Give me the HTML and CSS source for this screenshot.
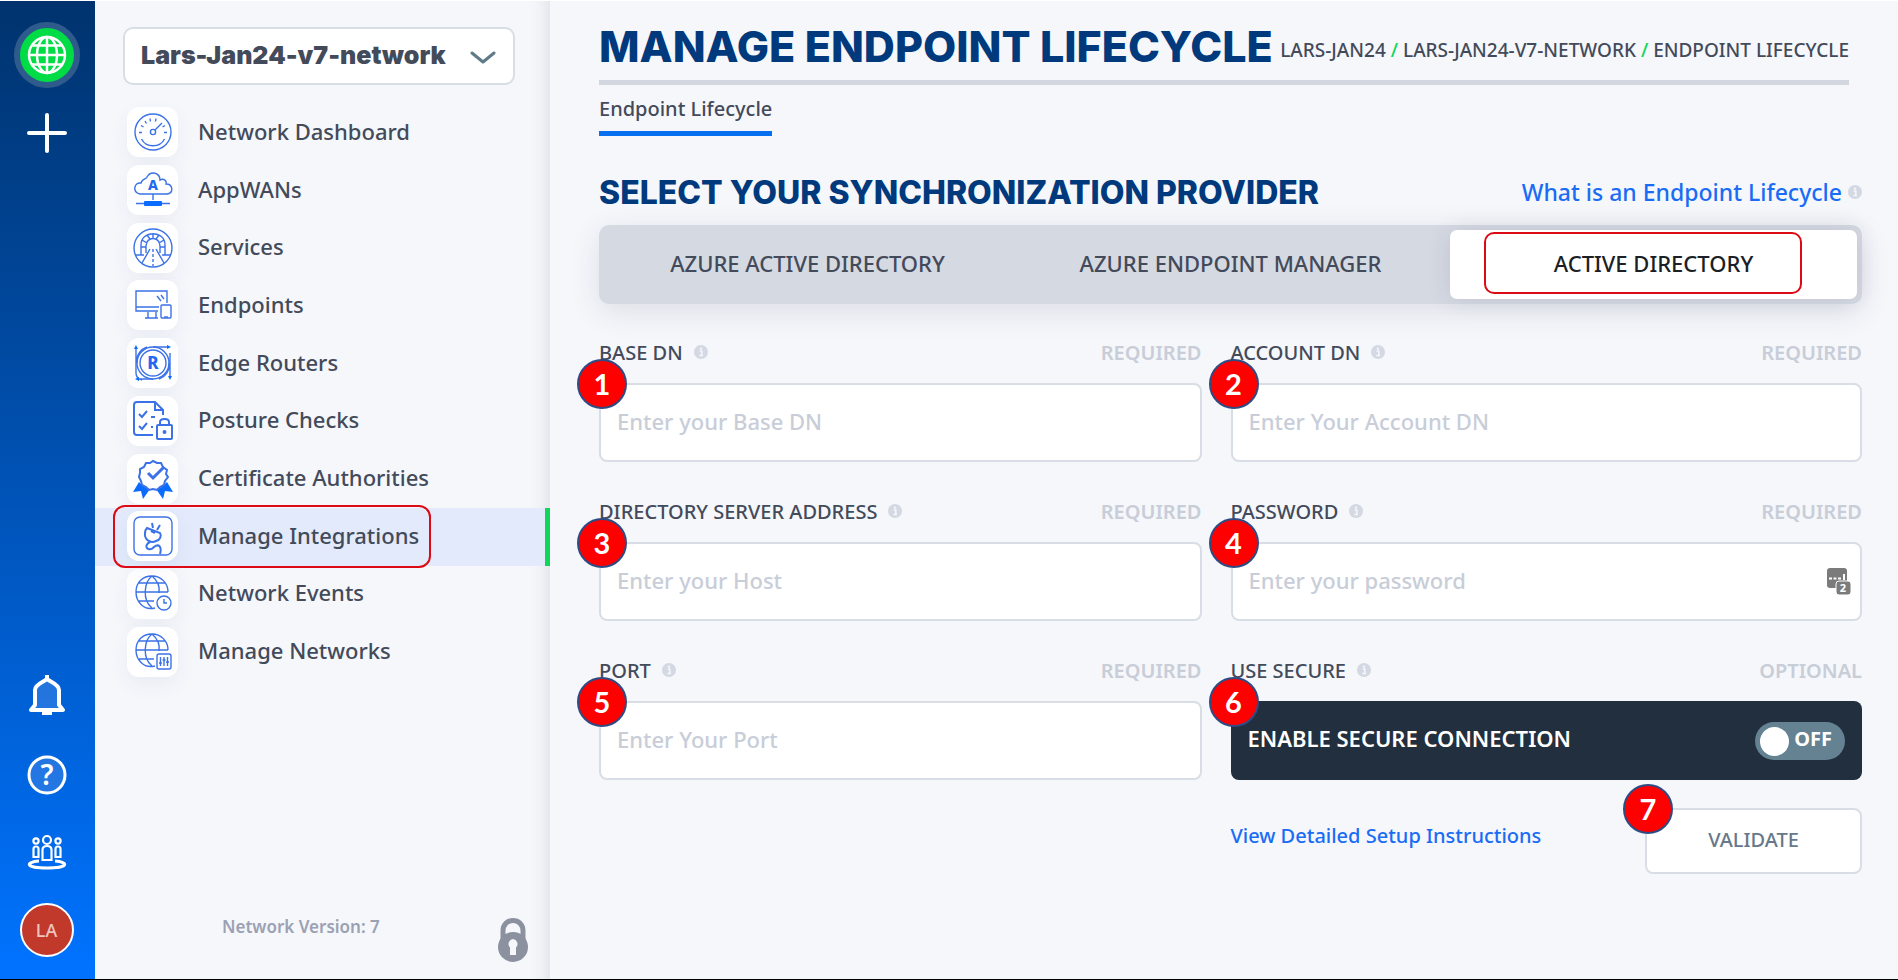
FILE: index.html
```html
<!DOCTYPE html>
<html lang="en">
<head>
    <meta charset="UTF-8">
    <title>Manage Endpoint Lifecycle</title>
    <link rel="stylesheet" href="styles.css">
</head>
<body>
    <!-- shared symbols -->
    <svg class="symbols" aria-hidden="true">
        <symbol id="info" viewBox="0 0 14 14">
            <circle cx="7" cy="7" r="7" fill="#d3d8e2"/>
            <circle cx="7" cy="3.6" r="1.2" fill="#f5f7fb"/>
            <path d="M5.5 6H7.8V10.6M5.3 10.6H9" fill="none" stroke="#f5f7fb" stroke-width="1.5"/>
        </symbol>
        <symbol id="globe" viewBox="0 0 40 40">
            <g fill="none" stroke="currentColor">
                <circle cx="20" cy="20" r="18"/>
                <ellipse cx="20" cy="20" rx="10" ry="18"/>
                <path d="M20 2V38M2 20H38M5 10.5H35M5 29.5H35"/>
            </g>
        </symbol>
    </svg>

    <div id="rail">
        <button class="railButton home" aria-label="Network">
            <svg width="40" height="40" stroke-width="2.5"><use href="#globe"/></svg>
        </button>
        <button class="railButton add" aria-label="Add">
            <svg width="40" height="40" viewBox="0 0 40 40"><path d="M20 2V38M2 20H38" stroke="#fff" stroke-width="4" stroke-linecap="round"/></svg>
        </button>
        <div class="railBottom">
            <button class="railButton" aria-label="Notifications">
                <svg width="40" height="42" viewBox="0 0 40 42">
                    <path d="M20 1V5M20 5C23 8 32 10 32 16V31L36 36H4L8 31V16C8 10 17 8 20 5Z" fill="#3b82e4" fill-opacity=".6" stroke="#fff" stroke-width="4" stroke-linejoin="round"/>
                    <path d="M15 37H25V41H15Z" fill="#fff"/>
                </svg>
            </button>
            <button class="railButton" aria-label="Help">
                <svg width="40" height="40" viewBox="0 0 40 40">
                    <circle cx="20" cy="20" r="18" fill="#3b82e4" fill-opacity=".6" stroke="#fff" stroke-width="3"/>
                    <text x="20" y="30" text-anchor="middle" font-size="28" font-weight="600" fill="#fff">?</text>
                </svg>
            </button>
            <button class="railButton" aria-label="Organization">
                <svg width="40" height="36" viewBox="0 0 40 36">
                    <g fill="none" stroke="#fff" stroke-width="2.2">
                        <circle cx="20" cy="6" r="4"/>
                        <circle cx="9" cy="7" r="2.6"/>
                        <circle cx="31" cy="7" r="2.6"/>
                        <path d="M15.500 26V16Q15.500 12 20 12T24.500 16V26Z"/>
                        <path d="M6.500 23V15Q6.500 12.500 9 12.500T11.500 15V23Z"/>
                        <path d="M28.500 23V15Q28.500 12.500 31 12.500T33.500 15V23Z"/>
                        <path d="M12 27C-2 28 -2 34 20 34S42 28 28 27" stroke-width="3"/>
                    </g>
                </svg>
            </button>
            <button class="avatar">LA</button>
        </div>
    </div>

    <div id="sidebar">
        <div class="networkSelect">
            <select aria-label="Network">
                <option>Lars-Jan24-v7-network</option>
            </select>
            <svg width="26" height="14" viewBox="0 0 26 14"><path d="M2 2L13 11L24 2" fill="none" stroke="#5f7a88" stroke-width="3" stroke-linecap="round" stroke-linejoin="round"/></svg>
        </div>

        <nav>
            <a href="#">
                <span class="tile"><svg viewBox="0 0 40 40">
                    <circle cx="20" cy="20" r="18"/>
                    <circle cx="20" cy="20" r="2.600"/>
                    <path d="M22 18L29 11M8.500 27C13 36 27 36 31.500 27M6 20.500H9M31 20.500H34M8 13.500L10.500 15M12 9L13.500 11.500M17 6.500L17.500 9.500M23 6.500L22.500 9.500M32 13.500L29.500 15"/>
                </svg></span>
                Network Dashboard
            </a>
            <a href="#">
                <span class="tile"><svg viewBox="0 0 40 40">
                    <path d="M7 24C-1 22 1 12 8 13C9 8 14 9 14 7C18 0 27 3 27 10C31 8 34 11 33 14C40 14 41 23 34 24ZM20 24V30M3 33.500H37"/>
                    <rect x="11" y="31" width="18" height="5" rx="1" class="solid"/>
                    <text x="20" y="20" text-anchor="middle" font-size="14">A</text>
                </svg></span>
                AppWANs
            </a>
            <a href="#">
                <span class="tile"><svg viewBox="0 0 40 40">
                    <circle cx="20" cy="20" r="19"/>
                    <path d="M8 27V17C8 2 32 2 32 17V27M13 25V18C13 8 27 8 27 18V25M2 27H11M29 27H38M17 21L9 35M23 21L31 35M8 19H13M9 12L14 15M14 7L17 11M20 5V10M26 7L23 11M31 12L26 15M32 19H27"/>
                    <path d="M20 21V38" stroke-dasharray="3 2"/>
                </svg></span>
                Services
            </a>
            <a href="#">
                <span class="tile"><svg viewBox="0 0 40 40">
                    <path d="M25 26H3V6H34V18M3 22H26M15 27V33M23 27V33M12 33H25M24 11L28 16M28 10L31 14"/>
                    <rect x="28" y="20" width="10" height="13" rx="1"/>
                    <path d="M31 32H35"/>
                </svg></span>
                Endpoints
            </a>
            <a href="#">
                <span class="tile"><svg viewBox="0 0 40 40">
                    <circle cx="20" cy="20" r="16"/>
                    <circle cx="20" cy="20" r="13"/>
                    <path d="M3 30V4M3 30C3 34 5 36 9 37M20 4H36M37 10V35M20 36H4M4 20C3 12 8 6 14 4M36 20C37 28 32 34 26 36"/>
                    <path d="M1 6L3 2L5 6ZM34 2L38 4L34 6ZM35 33L37 37L39 33ZM6 34L2 36L6 38Z" class="solid"/>
                    <text x="20" y="26" text-anchor="middle" font-size="17">R</text>
                </svg></span>
                Edge Routers
            </a>
            <a href="#">
                <span class="tile"><svg viewBox="0 0 40 40" class="bold">
                    <path d="M20 34H4Q1 34 1 31V4Q1 1 4 1H22L30 9V14M22 1V9H30M6 13L9 16L14 10M6 25L9 28L14 22M18 16H22M18 26H20"/>
                    <rect x="24" y="24" width="15" height="14" rx="1"/>
                    <path d="M27 24V21Q27 18 31.500 18T36 21V24"/>
                    <circle cx="31.500" cy="31" r="1"/>
                </svg></span>
                Posture Checks
            </a>
            <a href="#">
                <span class="tile"><svg viewBox="0 0 40 40" class="bold">
                    <path d="M6 23L0 33L8 32L10 40L17 30Q11 29 6 23ZM34 23L40 33L32 32L30 40L23 30Q29 29 34 23Z" class="solid"/>
                    <path d="M20 2L24 4L28 4L30 8L34 11L33 15L35 18L32 22L31 26L27 28L24 31L20 30L16 31L13 28L9 26L8 22L6 18L7 14L7 10L11 8L13 4L17 4Z"/>
                    <path d="M15 14L20 19L31 8" stroke-width="3"/>
                </svg></span>
                Certificate Authorities
            </a>
            <a href="#" class="active">
                <span class="tile"><svg viewBox="0 0 40 40">
                    <rect x="1" y="1" width="38" height="38" rx="6"/>
                    <path d="M19 7L20 12M27 9L24 14M14 12L27 17C29 20 27 24 23 25C17 28 11 23 12 17Q12 14 14 12ZM18 15L22 17M17 26C9 30 16 37 21 31C26 27 29 31 27 38" stroke-width="2"/>
                </svg></span>
                Manage Integrations
            </a>
            <a href="#">
                <span class="tile"><svg viewBox="0 0 40 40">
                    <path d="M22 34C10 37 3 27 3 18C3 8 10 2 19 2S35 9 35 18M19 2C11 8 9 26 19 34M19 2C25 7 27 13 26 19M3 18H35M6 9H32M6 27H21"/>
                    <circle cx="31" cy="29" r="7"/>
                    <path d="M31 25V29H34"/>
                </svg></span>
                Network Events
            </a>
            <a href="#">
                <span class="tile"><svg viewBox="0 0 40 40">
                    <path d="M22 34C10 37 3 27 3 18C3 8 10 2 19 2S35 9 35 18M19 2C11 8 9 26 19 34M19 2C25 7 27 13 26 19M3 18H35M6 9H32M6 27H21"/>
                    <rect x="24" y="22" width="14" height="15" rx="2"/>
                    <path d="M27.500 25V34M31 25V34M34.500 25V34M26 31H29M29.500 28H32.500M33 30H36"/>
                </svg></span>
                Manage Networks
            </a>
        </nav>

        <div class="sidebarFooter">
            <span>Network Version: 7</span>
            <svg width="32" height="46" viewBox="0 0 32 46">
                <path d="M6 24V14C6 0 26 0 26 14V24" fill="none" stroke="#8b919f" stroke-width="5"/>
                <path d="M5 17H27V22H5Z" fill="#8b919f"/>
                <circle cx="16" cy="30" r="15" fill="#8b919f"/>
                <path d="M16 22A5 5 0 0 0 13 30.500V38H19V30.500A5 5 0 0 0 16 22Z" fill="#f5f7fb"/>
            </svg>
        </div>
    </div>

    <main>
        <header>
            <h1>MANAGE ENDPOINT LIFECYCLE</h1>
            <div class="breadcrumb">LARS-JAN24 <span>/</span> LARS-JAN24-V7-NETWORK <span>/</span> ENDPOINT LIFECYCLE</div>
        </header>
        <a href="#" class="pageTab">Endpoint Lifecycle</a>

        <div class="sectionHead">
            <h2>SELECT YOUR SYNCHRONIZATION PROVIDER</h2>
            <a href="#">What is an Endpoint Lifecycle <svg class="info"><use href="#info"/></svg></a>
        </div>

        <div class="providers">
            <button type="button">AZURE ACTIVE DIRECTORY</button>
            <button type="button">AZURE ENDPOINT MANAGER</button>
            <button type="button" class="active">ACTIVE DIRECTORY</button>
        </div>

        <form>
            <div class="field">
                <div class="fieldHead">
                    <label for="baseDn">BASE DN</label>
                    <svg class="info"><use href="#info"/></svg>
                    <span>REQUIRED</span>
                </div>
                <div class="control">
                    <input type="text" id="baseDn" placeholder="Enter your Base DN">
                    <b class="step">1</b>
                </div>
            </div>
            <div class="field">
                <div class="fieldHead">
                    <label for="accountDn">ACCOUNT DN</label>
                    <svg class="info"><use href="#info"/></svg>
                    <span>REQUIRED</span>
                </div>
                <div class="control">
                    <input type="text" id="accountDn" placeholder="Enter Your Account DN">
                    <b class="step">2</b>
                </div>
            </div>
            <div class="field">
                <div class="fieldHead">
                    <label for="host">DIRECTORY SERVER ADDRESS</label>
                    <svg class="info"><use href="#info"/></svg>
                    <span>REQUIRED</span>
                </div>
                <div class="control">
                    <input type="text" id="host" placeholder="Enter your Host">
                    <b class="step">3</b>
                </div>
            </div>
            <div class="field">
                <div class="fieldHead">
                    <label for="password">PASSWORD</label>
                    <svg class="info"><use href="#info"/></svg>
                    <span>REQUIRED</span>
                </div>
                <div class="control">
                    <input type="password" id="password" placeholder="Enter your password">
                    <svg class="vault" width="24" height="27" viewBox="0 0 24 27">
                        <rect width="20" height="20" rx="3" fill="#7b7b7b"/>
                        <path d="M2 10.500H5M6.500 10.500H9.500M11 10.500H14M17 6V12" stroke="#fff" stroke-width="2"/>
                        <rect x="9" y="13" width="15" height="14" rx="3" fill="#7b7b7b" stroke="#fff"/>
                        <text x="16" y="24" text-anchor="middle" font-size="11" font-weight="700" fill="#fff">2</text>
                    </svg>
                    <b class="step">4</b>
                </div>
            </div>
            <div class="field">
                <div class="fieldHead">
                    <label for="port">PORT</label>
                    <svg class="info"><use href="#info"/></svg>
                    <span>REQUIRED</span>
                </div>
                <div class="control">
                    <input type="text" id="port" placeholder="Enter Your Port">
                    <b class="step">5</b>
                </div>
            </div>
            <div class="field">
                <div class="fieldHead">
                    <label for="secure">USE SECURE</label>
                    <svg class="info"><use href="#info"/></svg>
                    <span>OPTIONAL</span>
                </div>
                <div class="control secure">
                    <label for="secure">ENABLE SECURE CONNECTION</label>
                    <div class="switch">
                        <input type="checkbox" id="secure">
                        <span>OFF</span>
                    </div>
                    <b class="step">6</b>
                </div>
            </div>
            <div class="actions">
                <a href="#">View Detailed Setup Instructions</a>
                <div class="control">
                    <button type="button">VALIDATE</button>
                    <b class="step">7</b>
                </div>
            </div>
        </form>
    </main>
</body>
</html>
```
FILE: styles.css
```css
* {
    box-sizing: border-box;
}
body {
    margin: 0;
    display: flex;
    min-height: 100vh;
    border-top: 1px solid #fff;
    border-bottom: 1px solid #000;
    background-color: #f5f7fb;
    font-family: "Noto Sans", "Open Sans", sans-serif;
    font-weight: 500;
    color: #434a5a;
}
a {
    color: #1a6cf5;
    text-decoration: none;
}
button, input, select {
    font: inherit;
    color: inherit;
}
button {
    cursor: pointer;
}
.symbols {
    position: absolute;
    width: 0;
    height: 0;
}

/* left rail */
#rail {
    width: 95px;
    flex: none;
    display: flex;
    flex-direction: column;
    align-items: center;
    padding: 21px 2px 22px 0;
    background: linear-gradient(#00336e, #0073ff);
}
.railButton {
    display: flex;
    padding: 0;
    border: 0;
    background: none;
    color: #fff;
}
.home {
    width: 66px;
    height: 66px;
    align-items: center;
    justify-content: center;
    border: 6px solid #2f5b8c;
    border-radius: 50%;
    background-color: #00dc46;
}
.add {
    margin-top: 25px;
}
.railBottom {
    margin-top: auto;
    display: flex;
    flex-direction: column;
    align-items: center;
    gap: 39px;
}
.avatar {
    width: 54px;
    height: 54px;
    margin-top: -6px;
    padding: 0;
    border: 2px solid #fff;
    border-radius: 50%;
    background-color: #c0392b;
    color: #f0c4be;
    font-size: 18px;
}

/* sidebar */
#sidebar {
    width: 455px;
    flex: none;
    display: flex;
    flex-direction: column;
    padding-top: 26px;
    box-shadow: inset -20px 0 20px -20px #d4d7de;
}
.networkSelect {
    position: relative;
    margin: 0 35px 0 28px;
}
.networkSelect select {
    width: 100%;
    height: 58px;
    padding: 0 16px 2px;
    appearance: none;
    border: 2px solid #d9dde5;
    border-radius: 10px;
    background-color: #fff;
    font-family: Inter, sans-serif;
    font-size: 25px;
    font-weight: 900;
}
.networkSelect svg {
    position: absolute;
    right: 19px;
    top: 24px;
    pointer-events: none;
}
nav {
    display: grid;
    grid-auto-rows: 1fr;
    height: 577px;
    margin-top: 19px;
}
nav a {
    display: flex;
    align-items: center;
    gap: 20px;
    padding: 0 0 4px 32px;
    font-size: 22px;
    color: #434a5a;
}
nav a.active {
    position: relative;
    background-color: #e2eafb;
    border-right: 5px solid #10d659;
}
nav a.active::after {
    content: "";
    position: absolute;
    left: 18px;
    top: -3px;
    width: 314px;
    height: 59px;
    border: 2px solid #dc0a14;
    border-radius: 12px;
}
.tile {
    width: 51px;
    height: 50px;
    margin-bottom: -3px;
    display: flex;
    align-items: center;
    justify-content: center;
    border-radius: 12px;
    background-color: #fff;
    box-shadow: 0 8px 20px rgba(60, 70, 130, .06);
}
.tile svg {
    width: 40px;
    height: 40px;
    fill: none;
    stroke: #3b72e8;
    stroke-width: 1.4;
}
.tile svg.bold {
    stroke-width: 2;
}
.tile .solid {
    fill: #0a6cff;
    stroke: none;
}
.tile text {
    fill: #2468f0;
    stroke: none;
    font-weight: 800;
}
.sidebarFooter {
    display: flex;
    justify-content: space-between;
    margin-top: auto;
    padding: 0 21px 16px 127px;
    font-size: 17px;
    font-weight: 600;
    line-height: 20px;
    color: #9ba1b3;
}

/* main area */
main {
    flex: 1;
    min-width: 0;
    padding: 19px 36px 20px 49px;
}
header {
    display: flex;
    align-items: center;
    justify-content: space-between;
    height: 65px;
    margin-right: 13px;
    border-bottom: 5px solid #d3d7df;
    white-space: nowrap;
}
h1, h2 {
    margin: 0;
    font-family: Inter, sans-serif;
    font-weight: 800;
    color: #003a7d;
}
h1 {
    font-size: 43px;
    line-height: 52px;
    padding-bottom: 8px;
}
.breadcrumb {
    font-size: 19px;
}
.breadcrumb span {
    color: #10d659;
}
.pageTab {
    display: inline-block;
    margin-top: 6px;
    padding-bottom: 4px;
    border-bottom: 5px solid #0770f0;
    font-size: 20px;
    line-height: 36px;
    color: #434a5a;
}
.sectionHead {
    display: flex;
    align-items: center;
    justify-content: space-between;
    height: 46px;
    margin-top: 33px;
}
h2 {
    font-size: 32px;
}
.sectionHead a {
    display: flex;
    align-items: center;
    gap: 6px;
    font-size: 23px;
}
.info {
    width: 14px;
    height: 14px;
}
.providers {
    display: flex;
    gap: 16px;
    height: 79px;
    margin-top: 10px;
    padding: 5px;
    border-radius: 10px;
    background-color: #d5d9e2;
    box-shadow: 0 8px 30px rgba(40, 50, 70, .12);
}
.providers button {
    position: relative;
    flex: 1;
    padding: 0 0 3px;
    border: 0;
    border-radius: 7px;
    background: none;
    font-size: 22px;
}
.providers .active {
    background-color: #fff;
    color: #1c1f26;
    box-shadow: 0 0 24px rgba(40, 50, 70, .12);
}
.providers .active::after {
    content: "";
    position: absolute;
    inset: 2px 55px 5px 34px;
    border: 2px solid #dc0a14;
    border-radius: 10px;
}

/* form */
form {
    display: grid;
    grid-template-columns: 603fr 632fr;
    gap: 36px 29px;
    margin-top: 35px;
}
.fieldHead {
    display: flex;
    align-items: center;
    gap: 11px;
    height: 26px;
    margin-bottom: 18px;
    font-size: 20px;
}
.fieldHead span {
    margin-left: auto;
    font-weight: 600;
    color: #c8cdd8;
}
.control {
    position: relative;
}
.control > input {
    display: block;
    width: 100%;
    height: 79px;
    padding: 0 16px 3px;
    border: 2px solid #d9dde5;
    border-radius: 8px;
    background-color: #fff;
    font-size: 22px;
}
.control > input::placeholder {
    color: #c8cdd8;
}
.vault {
    position: absolute;
    right: 11px;
    top: 26px;
    overflow: visible;
}
.step {
    position: absolute;
    left: -22px;
    top: -24px;
    width: 50px;
    height: 50px;
    border: 2px solid #2f4b84;
    border-radius: 50%;
    background-color: #fe0000;
    color: #fff;
    font-family: Lato, sans-serif;
    font-size: 29px;
    font-weight: 700;
    line-height: 46px;
    text-align: center;
}
.secure {
    display: flex;
    align-items: center;
    justify-content: space-between;
    height: 79px;
    padding: 0 17px;
    border-radius: 8px;
    background-color: #222f3e;
    color: #fff;
    font-size: 22px;
}
.secure label {
    padding-bottom: 6px;
    font-weight: 600;
}
.switch {
    position: relative;
    width: 90px;
    height: 38px;
}
.switch input {
    width: 90px;
    height: 38px;
    margin: 0;
    padding: 5px;
    appearance: none;
    border-radius: 19px;
    background-color: #658292;
}
.switch input::before {
    content: "";
    display: block;
    width: 29px;
    height: 29px;
    border-radius: 50%;
    background-color: #fff;
}
.switch span {
    position: absolute;
    right: 13px;
    top: 0;
    font-size: 20px;
    font-weight: 700;
    line-height: 34px;
    pointer-events: none;
}
.actions {
    grid-column: 2;
    display: flex;
    justify-content: space-between;
    margin-top: -8px;
}
.actions a {
    font-size: 20px;
    line-height: 56px;
}
.actions button {
    width: 217px;
    height: 66px;
    padding: 0 0 4px;
    border: 2px solid #d9dde5;
    border-radius: 8px;
    background-color: #fff;
    color: #66788a;
    font-size: 20px;
}
```
